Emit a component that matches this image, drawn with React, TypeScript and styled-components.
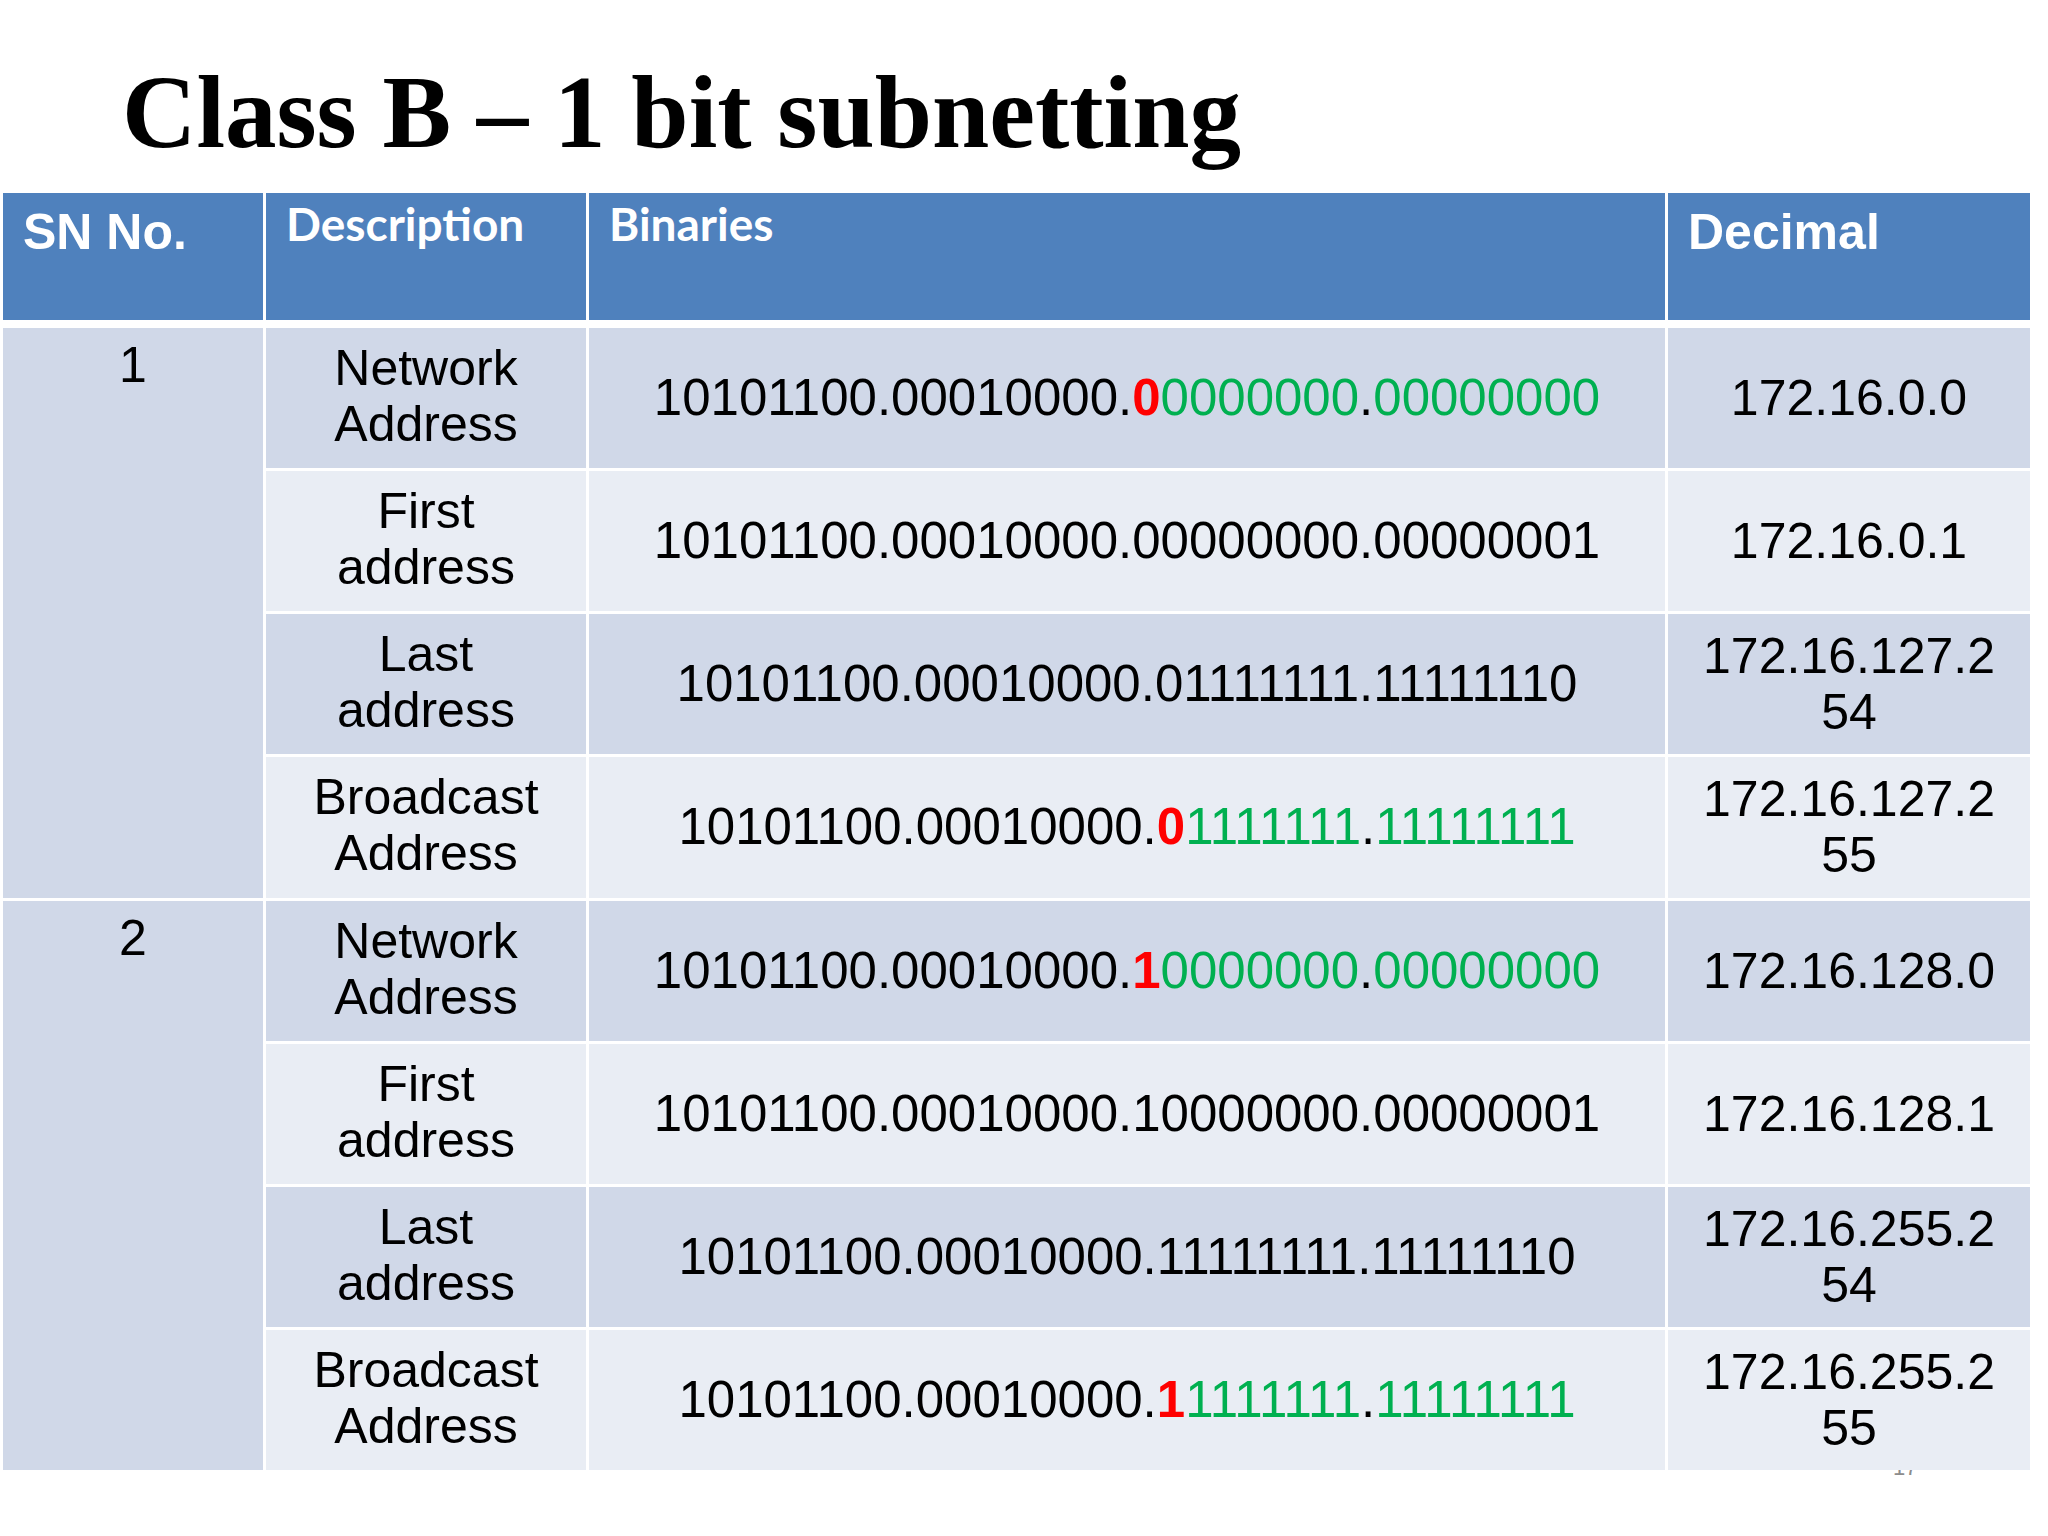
import styled, { createGlobalStyle } from 'styled-components';

const GlobalStyle = createGlobalStyle`
  html, body {
    margin: 0;
    padding: 0;
    background: #fff;
  }
`;

const Slide = styled.div`
  position: relative;
  width: 2048px;
  height: 1536px;
  background: #fff;
  overflow: hidden;
  font-family: 'Liberation Sans', Arial, sans-serif;
`;

const Title = styled.h1`
  margin: 61px 0 0 122px;
  font-family: 'Liberation Serif', 'Times New Roman', serif;
  font-weight: bold;
  font-size: 103px;
  line-height: 1;
  color: #000;
`;

const Table = styled.div`
  position: relative;
  z-index: 1;
  margin: 29px 0 0 3px;
  width: 2027px;
  display: flex;
  flex-direction: column;
  gap: 8px;
  background: #fff;
`;

const columns = '260px 320px 1076px 362px';

const HeadRow = styled.div`
  display: grid;
  grid-template-columns: ${columns};
  column-gap: 3px;
  height: 127px;
`;

const HeadCell = styled.div<{ $calibri?: boolean }>`
  background: #4f81bd;
  color: #fff;
  padding: ${(p) => (p.$calibri ? '8px 20px 0' : '14px 20px 0')};
  font-family: ${(p) =>
    p.$calibri
      ? "Lato, 'Open Sans', sans-serif"
      : "'Liberation Sans', Arial, sans-serif"};
  font-weight: bold;
  font-size: ${(p) => (p.$calibri ? '46px' : '50px')};
  line-height: 1;
`;

const Body = styled.div`
  display: grid;
  grid-template-columns: ${columns};
  grid-template-rows: repeat(8, 1fr);
  gap: 3px;
  height: 1142px;
`;

const SnCell = styled.div`
  grid-column: 1;
  grid-row: span 4;
  background: #d0d8e8;
  padding-top: 9px;
  text-align: center;
  font-size: 50px;
  line-height: 56px;
`;

const Cell = styled.div<{ $dark: boolean }>`
  background: ${(p) => (p.$dark ? '#d0d8e8' : '#e9edf4')};
  display: flex;
  flex-direction: column;
  align-items: center;
  justify-content: center;
  text-align: center;
  font-size: 50px;
  line-height: 56px;
  color: #000;
`;

const DescCell = styled(Cell)`
  padding-bottom: 4px;
`;

const DecimalCell = styled(Cell)`
  padding: 0 24px;
  word-break: break-all;
`;

const Binary = styled.span`
  white-space: nowrap;
  font-size: 51px;
`;

const Bit = styled.span<{ $tone?: 'red' | 'green' }>`
  color: ${(p) =>
    p.$tone === 'red' ? '#ff0000' : p.$tone === 'green' ? '#00b050' : '#000'};
  font-weight: ${(p) => (p.$tone === 'red' ? 'bold' : 'normal')};
`;

const SlideNumber = styled.div`
  position: absolute;
  left: 1893px;
  top: 1457px;
  font-size: 22px;
  line-height: 1;
  color: #8c8c8c;
`;

type Part = { text: string; tone?: 'red' | 'green' };
type Row = { desc: [string, string]; bin: Part[]; dec: string };

const flag = (prefix: string, red: string, rest: string): Part[] => {
  const [a, b] = rest.split('.');
  return [
    { text: prefix },
    { text: red, tone: 'red' },
    { text: a, tone: 'green' },
    { text: '.' },
    { text: b, tone: 'green' },
  ];
};

const groups: { sn: string; rows: Row[] }[] = [
  {
    sn: '1',
    rows: [
      {
        desc: ['Network', 'Address'],
        bin: flag('10101100.00010000.', '0', '0000000.00000000'),
        dec: '172.16.0.0',
      },
      {
        desc: ['First', 'address'],
        bin: [{ text: '10101100.00010000.00000000.00000001' }],
        dec: '172.16.0.1',
      },
      {
        desc: ['Last', 'address'],
        bin: [{ text: '10101100.00010000.01111111.11111110' }],
        dec: '172.16.127.254',
      },
      {
        desc: ['Broadcast', 'Address'],
        bin: flag('10101100.00010000.', '0', '1111111.11111111'),
        dec: '172.16.127.255',
      },
    ],
  },
  {
    sn: '2',
    rows: [
      {
        desc: ['Network', 'Address'],
        bin: flag('10101100.00010000.', '1', '0000000.00000000'),
        dec: '172.16.128.0',
      },
      {
        desc: ['First', 'address'],
        bin: [{ text: '10101100.00010000.10000000.00000001' }],
        dec: '172.16.128.1',
      },
      {
        desc: ['Last', 'address'],
        bin: [{ text: '10101100.00010000.11111111.11111110' }],
        dec: '172.16.255.254',
      },
      {
        desc: ['Broadcast', 'Address'],
        bin: flag('10101100.00010000.', '1', '1111111.11111111'),
        dec: '172.16.255.255',
      },
    ],
  },
];

export default function App() {
  return (
    <>
      <GlobalStyle />
      <Slide>
        <Title>Class B – 1 bit subnetting</Title>
        <Table>
          <HeadRow>
            <HeadCell>SN No.</HeadCell>
            <HeadCell $calibri>Description</HeadCell>
            <HeadCell $calibri>Binaries</HeadCell>
            <HeadCell>Decimal</HeadCell>
          </HeadRow>
          <Body>
            {groups.map((g) => [
              <SnCell key={`sn${g.sn}`}>{g.sn}</SnCell>,
              ...g.rows.map((r, i) => {
                const dark = i % 2 === 0;
                return [
                  <DescCell key={`d${g.sn}${i}`} $dark={dark}>
                    <span>{r.desc[0]}</span>
                    <span>{r.desc[1]}</span>
                  </DescCell>,
                  <Cell key={`b${g.sn}${i}`} $dark={dark}>
                    <Binary>
                      {r.bin.map((p, j) => (
                        <Bit key={j} $tone={p.tone}>
                          {p.text}
                        </Bit>
                      ))}
                    </Binary>
                  </Cell>,
                  <DecimalCell key={`x${g.sn}${i}`} $dark={dark}>
                    <span>{r.dec}</span>
                  </DecimalCell>,
                ];
              }),
            ])}
          </Body>
        </Table>
        <SlideNumber>17</SlideNumber>
      </Slide>
    </>
  );
}
